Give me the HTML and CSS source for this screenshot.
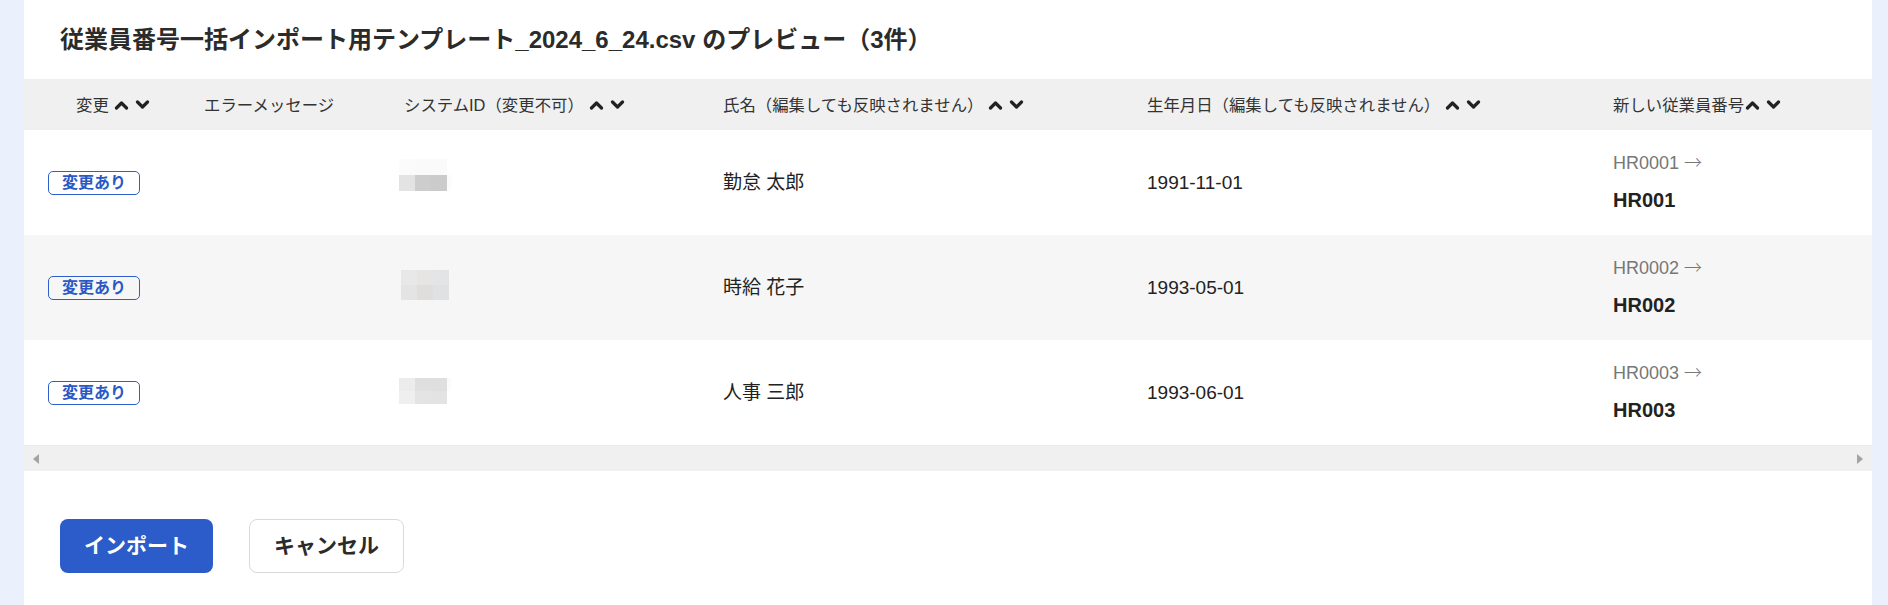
FILE: index.html
```html
<!DOCTYPE html>
<html lang="ja">
<head>
<meta charset="utf-8">
<title>プレビュー</title>
<link rel="stylesheet" href="styles.css">
</head>
<body>
<div class="page">
  <section class="panel">
    <h2 class="title">従業員番号一括インポート用テンプレート_2024_6_24.csv のプレビュー（3件）</h2>
    <div class="table">
      <div class="row head">
        <div class="cell c1"><span>変更</span><span class="sort"><svg viewBox="0 0 14 10"><polyline points="2,8 7,3 12,8"/></svg><svg viewBox="0 0 14 10"><polyline points="2,2 7,7 12,2"/></svg></span></div>
        <div class="cell"><span>エラーメッセージ</span></div>
        <div class="cell"><span>システムID（変更不可）</span><span class="sort"><svg viewBox="0 0 14 10"><polyline points="2,8 7,3 12,8"/></svg><svg viewBox="0 0 14 10"><polyline points="2,2 7,7 12,2"/></svg></span></div>
        <div class="cell"><span>氏名（編集しても反映されません）</span><span class="sort"><svg viewBox="0 0 14 10"><polyline points="2,8 7,3 12,8"/></svg><svg viewBox="0 0 14 10"><polyline points="2,2 7,7 12,2"/></svg></span></div>
        <div class="cell"><span>生年月日（編集しても反映されません）</span><span class="sort"><svg viewBox="0 0 14 10"><polyline points="2,8 7,3 12,8"/></svg><svg viewBox="0 0 14 10"><polyline points="2,2 7,7 12,2"/></svg></span></div>
        <div class="cell"><span>新しい従業員番号</span><span class="sort tight"><svg viewBox="0 0 14 10"><polyline points="2,8 7,3 12,8"/></svg><svg viewBox="0 0 14 10"><polyline points="2,2 7,7 12,2"/></svg></span></div>
      </div>

      <div class="row">
        <div class="cell c1"><span class="badge">変更あり</span></div>
        <div class="cell"></div>
        <div class="cell"><svg class="mask" viewBox="0 0 52 48"><rect x="0" y="0" width="16" height="16" fill="#fbfbfb"/><rect x="16" y="0" width="16" height="16" fill="#fafafa"/><rect x="32" y="0" width="16" height="16" fill="#fafafa"/><rect x="0" y="16" width="16" height="16" fill="#e3e3e3"/><rect x="16" y="16" width="16" height="16" fill="#cdcdcd"/><rect x="32" y="16" width="16" height="16" fill="#cbcbcb"/><rect x="48" y="16" width="4" height="16" fill="#fafcfc"/></svg></div>
        <div class="cell">勤怠 太郎</div>
        <div class="cell">1991-11-01</div>
        <div class="cell"><div class="newid"><span class="old">HR0001 <span class="arr">→</span></span><span class="new">HR001</span></div></div>
      </div>

      <div class="row alt">
        <div class="cell c1"><span class="badge">変更あり</span></div>
        <div class="cell"></div>
        <div class="cell"><svg class="mask" viewBox="0 0 52 48"><rect x="2" y="6" width="16" height="15" fill="#e8e8e8"/><rect x="18" y="6" width="16" height="15" fill="#e6e5e4"/><rect x="34" y="6" width="16" height="15" fill="#e3e4e6"/><rect x="2" y="21" width="16" height="15" fill="#e4e4e4"/><rect x="18" y="21" width="16" height="15" fill="#dfdedc"/><rect x="34" y="21" width="16" height="15" fill="#e0e1e3"/></svg></div>
        <div class="cell">時給 花子</div>
        <div class="cell">1993-05-01</div>
        <div class="cell"><div class="newid"><span class="old">HR0002 <span class="arr">→</span></span><span class="new">HR002</span></div></div>
      </div>

      <div class="row">
        <div class="cell c1"><span class="badge">変更あり</span></div>
        <div class="cell"></div>
        <div class="cell"><svg class="mask" viewBox="0 0 52 48"><rect x="0" y="9" width="16" height="13" fill="#ececec"/><rect x="16" y="9" width="16" height="13" fill="#dfdfdf"/><rect x="32" y="9" width="16" height="13" fill="#dfdfdf"/><rect x="0" y="22" width="16" height="13" fill="#efefef"/><rect x="16" y="22" width="16" height="13" fill="#e4e4e4"/><rect x="32" y="22" width="16" height="13" fill="#e3e3e3"/><rect x="48" y="9" width="4" height="13" fill="#fbfbfb"/></svg></div>
        <div class="cell">人事 三郎</div>
        <div class="cell">1993-06-01</div>
        <div class="cell"><div class="newid"><span class="old">HR0003 <span class="arr">→</span></span><span class="new">HR003</span></div></div>
      </div>
    </div>

    <div class="hscroll"><span class="arrow left"></span><span class="arrow right"></span></div>

    <div class="actions">
      <button class="btn primary" type="button">インポート</button>
      <button class="btn secondary" type="button">キャンセル</button>
    </div>
  </section>
</div>
</body>
</html>
```

FILE: styles.css
```css
* { box-sizing: border-box; }

html, body {
  margin: 0;
  padding: 0;
}

body {
  background: #eaf1fc;
  font-family: "Liberation Sans", "Noto Sans CJK JP", sans-serif;
  color: #222;
}

.page {
  padding: 0 16px 0 24px;
}

.panel {
  background: #fff;
  min-height: 605px;
  padding-top: 24px;
}

.title {
  margin: 0 0 23px 0;
  padding-left: 36px;
  font-size: 24px;
  line-height: 32px;
  font-weight: 700;
  color: #2b2b2b;
}

.table {
  display: flex;
  flex-direction: column;
}

.row {
  display: grid;
  grid-template-columns: 164px 200px 319px 424px 466px 1fr;
  height: 105px;
  background: #fff;
}

.row.alt {
  background: #f6f6f6;
}

.row.head {
  height: 51px;
  background: #f0f0f0;
}

.cell {
  display: flex;
  align-items: center;
  padding-left: 16px;
  font-size: 19px;
  line-height: 26px;
  color: #222;
  white-space: nowrap;
}

.head .cell {
  font-size: 16.4px;
  line-height: 22px;
  color: #333;
}

.row .cell.c1 {
  padding-left: 24px;
}

.head .cell.c1 {
  padding-left: 52px;
}

.sort {
  display: inline-flex;
  align-items: center;
  gap: 6px;
  margin-left: 5px;
}

.sort.tight {
  margin-left: 1px;
}

.sort svg {
  width: 15px;
  height: 10px;
  fill: none;
  stroke: #222;
  stroke-width: 3.2;
  stroke-linecap: round;
  stroke-linejoin: round;
}

.badge {
  display: inline-block;
  border: 1px solid #2e5fcb;
  border-radius: 5px;
  color: #2a58c5;
  font-size: 16px;
  line-height: 22px;
  font-weight: 700;
  padding: 0 13px;
}

.mask {
  width: 52px;
  height: 48px;
  margin-left: -5px;
}

.newid {
  display: flex;
  flex-direction: column;
  gap: 12px;
  margin-top: -4px;
}

.old {
  font-size: 18px;
  line-height: 24px;
  color: #777;
}

.arr {
  font-family: "Noto Sans CJK JP", sans-serif;
  font-weight: 300;
  font-size: 18px;
}

.new {
  font-size: 20px;
  line-height: 26px;
  font-weight: 700;
  color: #222;
}

.hscroll {
  height: 26px;
  background: #f0f0f0;
  border-top: 1px solid #ebebeb;
  display: flex;
  align-items: center;
  justify-content: space-between;
  padding: 0 9px;
}

.arrow {
  width: 0;
  height: 0;
  border-top: 5px solid transparent;
  border-bottom: 5px solid transparent;
}

.arrow.left {
  border-right: 6px solid #a3a3a3;
}

.arrow.right {
  border-left: 6px solid #a3a3a3;
}

.actions {
  display: flex;
  gap: 36px;
  padding-left: 36px;
  margin-top: 48px;
}

.btn {
  height: 54px;
  border-radius: 8px;
  font-family: "Liberation Sans", "Noto Sans CJK JP", sans-serif;
  font-size: 21px;
  font-weight: 700;
  line-height: 26px;
  padding: 0;
  cursor: pointer;
}

.btn.primary {
  width: 153px;
  background: #2b5cc9;
  border: none;
  color: #fff;
}

.btn.secondary {
  width: 155px;
  background: #fff;
  border: 1px solid #dadada;
  color: #2b2b2b;
}
```
